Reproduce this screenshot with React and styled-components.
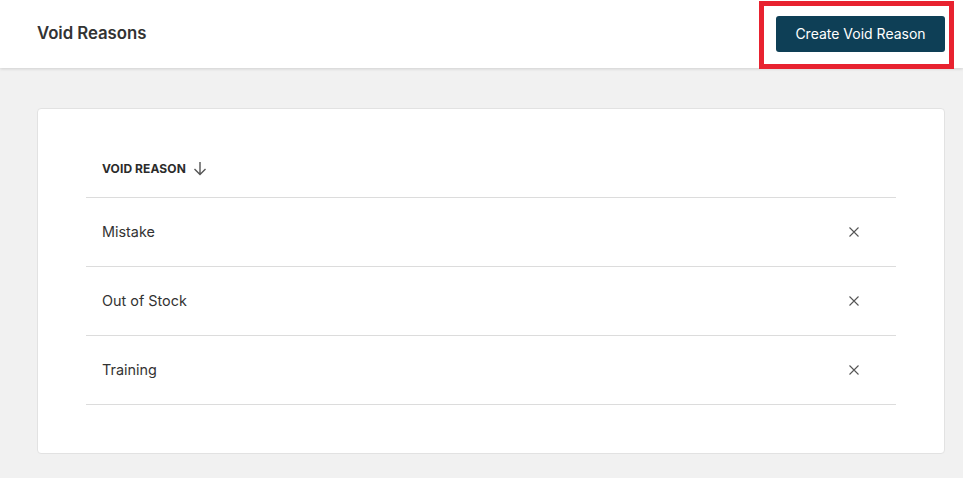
import React from "react";
import styled, { createGlobalStyle } from "styled-components";

const Global = createGlobalStyle`
  html, body { margin: 0; padding: 0; background: #f1f1f1; }
  body { font-family: Inter, "Noto Sans", sans-serif; color: #333; -webkit-font-smoothing: antialiased; }
  * { box-sizing: border-box; }
`;

const Page = styled.div`
  min-height: 478px;
  background: #f1f1f1;
`;

const Header = styled.header`
  height: 68px;
  background: #fff;
  box-shadow: 0 1px 3px rgba(0, 0, 0, 0.14);
  display: flex;
  align-items: center;
  justify-content: space-between;
  padding: 0 18px 0 37px;
  position: relative;
  z-index: 1;
`;

const Title = styled.h1`
  margin: 0 0 2px;
  font-size: 16.8px;
  font-weight: 600;
  color: #333;
  letter-spacing: -0.05px;
`;

const ButtonWrap = styled.div`
  position: relative;
`;

const Highlight = styled.div`
  position: absolute;
  left: -17px;
  top: -15px;
  right: -9px;
  bottom: -17px;
  border: 5px solid #e8222f;
  pointer-events: none;
`;

const PrimaryButton = styled.button`
  width: 169px;
  height: 36px;
  border: 0;
  border-radius: 3px;
  background: #0e3f56;
  color: #fff;
  font-family: Inter, "Noto Sans", sans-serif;
  font-size: 14px;
  font-weight: 400;
  padding: 0 0 1px;
  cursor: pointer;
`;

const Main = styled.main`
  padding: 40px 18px 24px 37px;
`;

const Card = styled.section`
  background: #fff;
  border: 1px solid #e2e2e2;
  border-radius: 4px;
  padding: 29px 48px 48px;
`;

const Table = styled.div`
  display: flex;
  flex-direction: column;
`;

const HeadRow = styled.div`
  height: 60px;
  display: flex;
  align-items: center;
  padding: 2px 0 0 16px;
  border-bottom: 1px solid #dcdcdc;
`;

const HeadCell = styled.div`
  display: flex;
  align-items: center;
  gap: 7px;
  font-size: 12px;
  font-weight: 700;
  letter-spacing: 0.1px;
  text-transform: uppercase;
  color: #2b2b2b;
`;

const Row = styled.div`
  height: 69px;
  display: flex;
  align-items: center;
  justify-content: space-between;
  padding: 0 37px 0 16px;
  border-bottom: 1px solid #dcdcdc;
`;

const Cell = styled.div`
  font-size: 14.4px;
  color: #333;
  padding-bottom: 2px;
`;

const IconButton = styled.button`
  border: 0;
  background: none;
  padding: 0;
  width: 10px;
  height: 10px;
  display: flex;
  cursor: pointer;
`;

const ArrowDown = () => (
  <svg width="14" height="15" viewBox="0 0 14 15" fill="none" stroke="#555" strokeWidth="1.4">
    <path d="M7 1v12.5M1.5 8l5.5 5.5L12.5 8" />
  </svg>
);

const Close = () => (
  <svg width="10" height="10" viewBox="0 0 10 10" fill="none" stroke="#555" strokeWidth="1.1">
    <path d="M0.5 0.5l9 9M9.5 0.5l-9 9" />
  </svg>
);

const reasons = ["Mistake", "Out of Stock", "Training"];

export default function App() {
  return (
    <Page>
      <Global />
      <Header>
        <Title>Void Reasons</Title>
        <ButtonWrap>
          <PrimaryButton>Create Void Reason</PrimaryButton>
          <Highlight />
        </ButtonWrap>
      </Header>
      <Main>
        <Card>
          <Table>
            <HeadRow>
              <HeadCell>
                Void Reason <ArrowDown />
              </HeadCell>
            </HeadRow>
            {reasons.map((r) => (
              <Row key={r}>
                <Cell>{r}</Cell>
                <IconButton aria-label={`Delete ${r}`}>
                  <Close />
                </IconButton>
              </Row>
            ))}
          </Table>
        </Card>
      </Main>
    </Page>
  );
}
